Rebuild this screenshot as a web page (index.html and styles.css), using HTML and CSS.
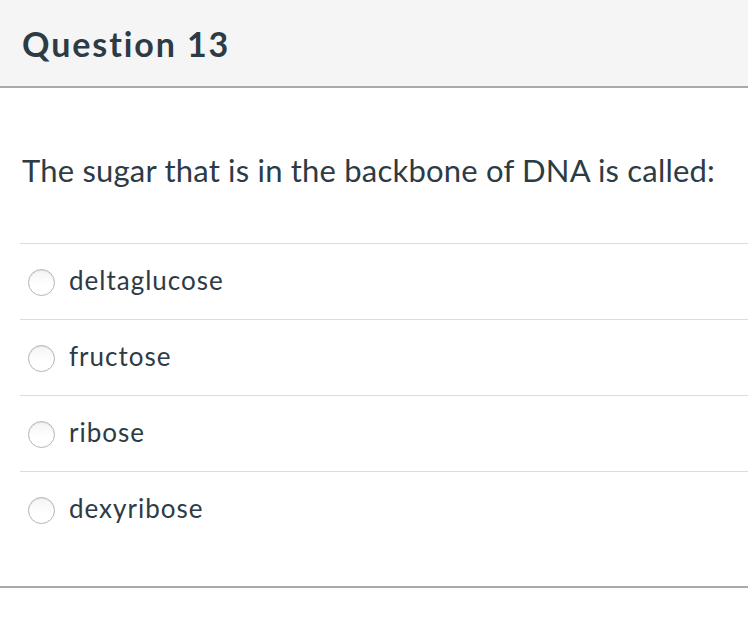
FILE: index.html
```html
<!DOCTYPE html>
<html>
<head>
<meta charset="utf-8">
<link rel="stylesheet" href="styles.css">
</head>
<body>
<div class="quiz">
  <div class="header"><h2 class="title">Question 13</h2></div>
  <div class="body">
    <p class="question">The sugar that is in the backbone of DNA is called:</p>
    <div class="answers">
      <label class="answer"><span class="radio"></span><span class="label">deltaglucose</span></label>
      <label class="answer"><span class="radio"></span><span class="label">fructose</span></label>
      <label class="answer"><span class="radio"></span><span class="label">ribose</span></label>
      <label class="answer"><span class="radio"></span><span class="label">dexyribose</span></label>
    </div>
  </div>
  <div class="footer"></div>
</div>
</body>
</html>
```
FILE: styles.css
```css
html, body { margin: 0; padding: 0; background: #fff; }
body { font-family: Lato, "Liberation Sans", sans-serif; color: #2d3b45; }
.quiz { width: 748px; }
.header {
  background: #f5f5f5;
  height: 86px;
  border-bottom: 2px solid #a9a9a9;
  display: flex;
  align-items: center;
  padding-left: 22px;
}
.title { margin: 0; font-size: 34px; font-weight: 700; letter-spacing: 1.9px; }
.body { padding: 0 0 39px 0; }
.question {
  margin: 0;
  padding: 64px 0 0 22px;
  height: 91px;
  font-size: 31px;
  line-height: 36px;
  letter-spacing: 0.2px;
}
.answers { margin-left: 20px; }
.answer {
  display: flex;
  align-items: center;
  height: 75px;
  border-top: 1px solid #dcdcdc;
  padding-left: 8px;
}
.radio {
  width: 27px;
  height: 27px;
  border-radius: 50%;
  border: 1px solid #b5b5b5;
  background: linear-gradient(#f4f4f4, #ffffff 60%);
  box-shadow: inset 0 1px 1px rgba(0,0,0,0.08);
  flex: none;
  box-sizing: border-box;
  margin-top: 2px;
}
.label { margin-left: 14px; font-size: 26px; letter-spacing: 1px; padding-bottom: 3px; }
.footer { border-top: 2px solid #a9a9a9; }
```
